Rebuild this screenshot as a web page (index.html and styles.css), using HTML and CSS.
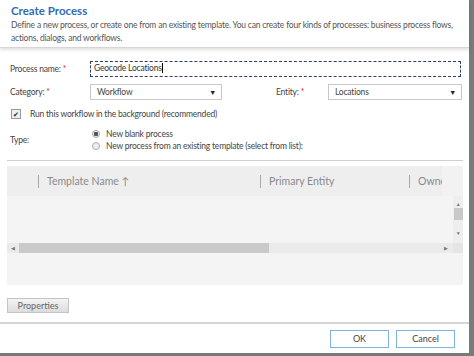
FILE: index.html
```html
<!DOCTYPE html>
<html lang="en">
<head>
  <meta charset="UTF-8">
  <title>Create Process</title>
  <link rel="stylesheet" href="styles.css">
</head>
<body>
  <div class="dialog">
    <div class="dialog-header">
      <h1>Create Process</h1>
      <p>Define a new process, or create one from an existing template. You can create four kinds of processes: business process flows, actions, dialogs, and workflows.</p>
    </div>

    <div class="dialog-body">
      <div class="row">
        <label class="lbl">Process name: <span class="req">*</span></label>
        <div class="name-input">Geocode Locations<span class="caret"></span></div>
      </div>

      <div class="row">
        <label class="lbl">Category: <span class="req">*</span></label>
        <div class="select small">Workflow<span class="arrow">&#9660;</span></div>
        <label class="lbl entity">Entity: <span class="req">*</span></label>
        <div class="select wide">Locations<span class="arrow">&#9660;</span></div>
      </div>

      <div class="check-row">
        <span class="check">&#10004;</span>
        <span>Run this workflow in the background (recommended)</span>
      </div>

      <div class="type-row">
        <label class="lbl">Type:</label>
        <div class="radios">
          <div class="radio-line"><span class="radio on"></span>New blank process</div>
          <div class="radio-line"><span class="radio"></span>New process from an existing template (select from list):</div>
        </div>
      </div>

      <div class="grid-box">
        <div class="grid-head">
          <div class="col first"></div>
          <div class="col name"><span class="sep"></span>Template Name &#8593;</div>
          <div class="col entity-col"><span class="sep"></span>Primary Entity</div>
          <div class="col owner"><span class="sep"></span>Owne</div>
        </div>
        <div class="grid-body">
          <div class="grid-rows"></div>
          <div class="vscroll">
            <span class="v-up">&#9650;</span>
            <span class="v-thumb"></span>
            <span class="v-down">&#9660;</span>
          </div>
        </div>
        <div class="hscroll">
          <span class="h-left">&#9664;</span>
          <div class="h-track"><span class="h-thumb"></span></div>
          <span class="h-right">&#9654;</span>
          <span class="h-corner"></span>
        </div>
        <div class="grid-foot"></div>
      </div>

      <button class="props">Properties</button>
    </div>

    <div class="dialog-footer">
      <button class="btn">OK</button>
      <button class="btn">Cancel</button>
    </div>
  </div>
</body>
</html>
```

FILE: styles.css
```css
body {
  margin: 0;
  background: #7a7a7a;
  font-family: Lato, "Open Sans", sans-serif;
  font-size: 8.5px;
  letter-spacing: -0.2px;
  color: #444;
}

.dialog {
  width: 469px;
  height: 353px;
  background: #fff;
  display: flex;
  flex-direction: column;
}

.dialog-header {
  height: 48px;
  box-sizing: border-box;
  padding: 4px 10px 0 11px;
  border-bottom: 1px solid #d6d6d6;
  box-shadow: 0 2px 3px rgba(0,0,0,0.12);
}

.dialog-header h1 {
  margin: 0 0 2px;
  font-size: 11.5px;
  font-weight: 700;
  letter-spacing: 0;
  color: #2f6cb5;
}

.dialog-header p {
  margin: 0;
  line-height: 13px;
  letter-spacing: -0.2px;
  color: #555;
}

.dialog-body {
  flex: 1;
  padding: 13px 7px 0 7px;
}

.row {
  display: flex;
  align-items: center;
  height: 16px;
  margin-bottom: 7px;
}

.lbl {
  width: 83px;
  padding-left: 3px;
  box-sizing: border-box;
  color: #444;
}

.req {
  color: #d22;
}

.name-input {
  flex: 1;
  height: 16px;
  margin-right: 1px;
  box-sizing: border-box;
  border: 1.5px dashed #2d3e66;
  padding: 0 3px;
  line-height: 13px;
  color: #333;
}

.caret {
  display: inline-block;
  width: 1px;
  height: 10px;
  background: #000;
  vertical-align: -2px;
}

.select {
  position: relative;
  height: 16px;
  box-sizing: border-box;
  border: 1px solid #c8c8c8;
  padding: 0 6px;
  line-height: 14px;
  color: #444;
}

.select.small { width: 132px; }
.select.wide { width: 134px; }

.select .arrow {
  position: absolute;
  right: 5px;
  top: 0;
  font-size: 7px;
  color: #222;
}

.lbl.entity {
  width: 106px;
  padding-left: 54px;
}

.check-row {
  display: flex;
  align-items: center;
  height: 14px;
  margin: 0 0 7px 4px;
}

.check {
  width: 8px;
  height: 8px;
  margin-right: 9px;
  border: 1px solid #999;
  background: #eee;
  font-size: 7px;
  line-height: 8px;
  text-align: center;
  color: #222;
}

.type-row {
  display: flex;
  align-items: center;
  margin-bottom: 8px;
}

.radios {
  display: flex;
  flex-direction: column;
}

.radio-line {
  display: flex;
  align-items: center;
  height: 12px;
}

.radio {
  width: 8px;
  height: 8px;
  margin: 0 6px 0 2px;
  border: 1px solid #aaa;
  border-radius: 50%;
  background: #eee;
  box-sizing: border-box;
}

.radio.on {
  background: radial-gradient(circle, #555 0 2px, #eee 2.5px);
}

.grid-box {
  border-top: 1px solid #d0d0d0;
  padding-top: 5px;
  width: 456px;
}

.grid-head {
  display: flex;
  height: 30px;
  background: #efeeef;
  color: #8a8a8a;
  font-size: 10.5px;
  letter-spacing: 0;
}

.col {
  display: flex;
  align-items: center;
  white-space: nowrap;
}

.col.first { width: 31px; }
.col.name { width: 222px; }
.col.entity-col { width: 149px; }
.col.owner { width: 33px; }

.sep {
  width: 1px;
  height: 13px;
  margin-right: 8px;
  background: #aaa;
  flex-shrink: 0;
}

.grid-head::after {
  content: "";
  flex: 1;
  background: #f3f2f3;
}

.grid-body {
  display: flex;
  height: 47px;
  background: #f5f4f5;
}

.grid-rows { flex: 1; }

.vscroll {
  width: 10px;
  display: flex;
  flex-direction: column;
  align-items: center;
  background: #efeeef;
  font-size: 5px;
  color: #777;
}

.v-up { margin-top: 5px; }

.v-thumb {
  width: 9px;
  height: 12px;
  margin-top: 1px;
  background: #c8c8c8;
}

.v-down { margin-top: auto; margin-bottom: 7px; }

.hscroll {
  display: flex;
  align-items: center;
  height: 10px;
  background: #ebeaeb;
  font-size: 5px;
  color: #777;
}

.h-left { width: 12px; text-align: center; }

.h-track {
  flex: 1;
  height: 10px;
}

.h-thumb {
  display: block;
  width: 250px;
  height: 10px;
  background: #c9c9c9;
}

.h-right { width: 14px; text-align: center; }

.h-corner {
  width: 10px;
  height: 10px;
  background: #e6e5e6;
}

.grid-foot {
  height: 32px;
  background: #f5f4f5;
}

.props {
  margin-top: 13px;
  width: 62px;
  height: 15px;
  padding: 0;
  border: 1px solid #c4c4c4;
  background: linear-gradient(#f4f4f4, #dcdcdc);
  font-family: inherit;
  font-size: 9px;
  color: #666;
}

.dialog-footer {
  height: 29px;
  border-top: 2px solid #d4d4d4;
  display: flex;
  justify-content: flex-end;
  align-items: center;
  gap: 7px;
  padding-right: 14px;
}

.btn {
  width: 59px;
  height: 18px;
  padding: 0;
  border: 1px solid #7fb2e5;
  background: #fff;
  font-family: inherit;
  font-size: 9px;
  color: #444;
}
```
